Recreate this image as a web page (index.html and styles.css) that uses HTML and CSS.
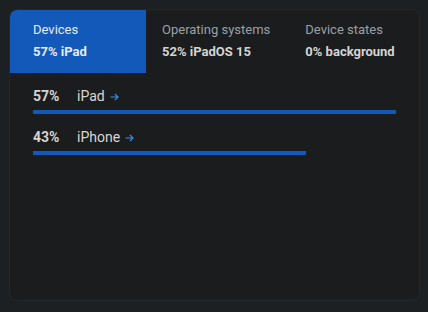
FILE: index.html
```html
<!DOCTYPE html>
<html lang="en">
<head>
    <meta charset="UTF-8">
    <title>Devices</title>
    <link rel="stylesheet" href="styles.css">
</head>
<body>
    <div class="card">
        <div class="tabs">
            <div class="tab active">
                <div class="tab-label">Devices</div>
                <div class="tab-value">57% iPad</div>
            </div>
            <div class="tab">
                <div class="tab-label">Operating systems</div>
                <div class="tab-value">52% iPadOS 15</div>
            </div>
            <div class="tab">
                <div class="tab-label">Device states</div>
                <div class="tab-value">0% background</div>
            </div>
        </div>

        <div class="rows">
            <div class="row">
                <div class="row-text">
                    <span class="pct">57%</span>
                    <span class="name">iPad</span>
                    <svg class="arrow" width="9" height="8" viewBox="0 0 9 8"><path d="M0.5 4H8M4.8 0.8L8 4L4.8 7.2" fill="none" stroke="#3d8ee8" stroke-width="1.2"/></svg>
                </div>
                <div class="bar" style="width: 100%"></div>
            </div>
            <div class="row">
                <div class="row-text">
                    <span class="pct">43%</span>
                    <span class="name">iPhone</span>
                    <svg class="arrow" width="9" height="8" viewBox="0 0 9 8"><path d="M0.5 4H8M4.8 0.8L8 4L4.8 7.2" fill="none" stroke="#3d8ee8" stroke-width="1.2"/></svg>
                </div>
                <div class="bar" style="width: 75.2%"></div>
            </div>
        </div>
    </div>
</body>
</html>
```

FILE: styles.css
```css
body {
    margin: 0;
    background: #1c2022;
    font-family: Roboto, "Liberation Sans", sans-serif;
    font-size: 13px;
}

.card {
    margin: 9px 8px 0 9px;
    height: 292px;
    box-sizing: border-box;
    background: #1a1c1e;
    border: 1px solid #24282b;
    border-radius: 8px;
    overflow: hidden;
}

.tabs {
    display: flex;
    margin: -1px 0 0 -1px;
}

.tab {
    height: 64px;
    box-sizing: border-box;
    padding: 13px 16px 0 16px;
}

.tab:first-child {
    width: 137px;
    padding-left: 24px;
}

.tab.active {
    background: #1259b9;
    border-top-left-radius: 8px;
}

.tab-label {
    color: #9aa0a6;
    line-height: 16px;
}

.tab-value {
    color: #d4d4d4;
    font-weight: bold;
    line-height: 16px;
    margin-top: 6px;
}

.tab.active .tab-label,
.tab.active .tab-value {
    color: #e8eaf0;
}

.tab:nth-child(3) {
    padding-left: 19px;
}

.rows {
    padding: 15px 23px 0 23px;
}

.row {
    margin-bottom: 15px;
}

.row-text {
    display: flex;
    align-items: baseline;
    line-height: 16px;
    color: #d8d8d8;
}

.pct {
    font-size: 14px;
    font-weight: bold;
    width: 44px;
    color: #d4d4d4;
}

.name {
    font-size: 14px;
}

.arrow {
    margin-left: 5px;
}

.bar {
    height: 4px;
    margin-top: 6px;
    background: #1259b9;
}
```
